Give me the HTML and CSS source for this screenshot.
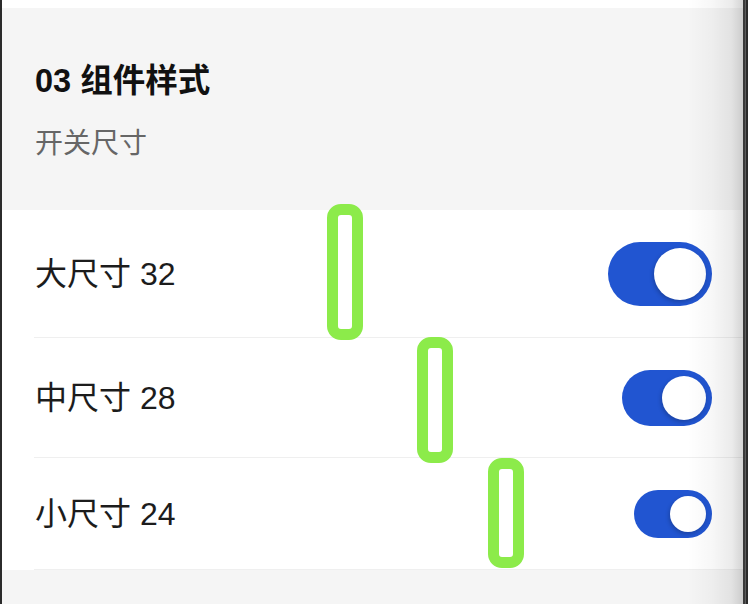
FILE: index.html
```html
<!DOCTYPE html>
<html lang="zh-CN">
<head>
  <meta charset="UTF-8">
  <meta name="viewport" content="width=device-width, initial-scale=1.0">
  <title>开关尺寸</title>
  <link rel="stylesheet" href="styles.css">
</head>
<body>
  <div class="device">
    <div class="bezel-left"></div>

    <div class="screen">
      <div class="top-strip"></div>

      <div class="section-head">
        <h2 class="section-title">03 组件样式</h2>
        <p class="section-desc">开关尺寸</p>
      </div>

      <div class="list">
        <div class="row">
          <span class="row-label">大尺寸 32</span>
          <span class="switch switch-lg is-on" role="switch" aria-checked="true"><span class="knob"></span></span>
        </div>
        <div class="row">
          <span class="row-label">中尺寸 28</span>
          <span class="switch switch-md is-on" role="switch" aria-checked="true"><span class="knob"></span></span>
        </div>
        <div class="row">
          <span class="row-label">小尺寸 24</span>
          <span class="switch switch-sm is-on" role="switch" aria-checked="true"><span class="knob"></span></span>
        </div>

        <!-- annotation markers -->
        <span class="marker marker-1"></span>
        <span class="marker marker-2"></span>
        <span class="marker marker-3"></span>
      </div>

      <div class="edge-shadow"></div>
    </div>

    <div class="bezel-right"></div>
  </div>
</body>
</html>
```

FILE: styles.css
```css
html, body {
  margin: 0;
  padding: 0;
}
body {
  font-family: "Liberation Sans", "Noto Sans CJK SC", sans-serif;
  background: #f5f5f5;
}
.device {
  display: flex;
  min-height: 100vh;
}
.bezel-left {
  width: 2px;
  background: #2b2b2b;
}
.bezel-right {
  width: 5px;
  background: linear-gradient(to right, #3b3b3b 0 2px, #5c5c5c 2px 3px, #2a2a2a 3px);
}
.screen {
  flex: 1;
  position: relative;
  background: #f5f5f5;
  overflow: hidden;
}
.top-strip {
  height: 8px;
  background: #fff;
}
.section-head {
  padding: 53px 33px 48px;
}
.section-title {
  margin: 0;
  font-size: 32.5px;
  line-height: 40px;
  font-weight: 700;
  color: #111;
}
.section-desc {
  margin: 25px 0 0;
  font-size: 28px;
  line-height: 36px;
  color: #666;
}
.list {
  position: relative;
  background: #fff;
  padding-left: 32px;
}
.row {
  display: flex;
  align-items: center;
  justify-content: space-between;
  padding: 32px 31px 31px 1px;
  border-bottom: 1px solid #efefef;
}
.row-label {
  margin-bottom: 1px;
  font-size: 32px;
  line-height: 40px;
  color: #1c1c1c;
}
.switch {
  display: flex;
  justify-content: flex-end;
  align-items: center;
  box-sizing: border-box;
  padding: 6px;
  border-radius: 999px;
  background: #ccc;
}
.switch.is-on {
  background: #2155d1;
}
.knob {
  border-radius: 50%;
  background: #fff;
  box-shadow: -1px 2px 4px rgba(0, 0, 0, 0.22);
}
.switch-lg { width: 104px; height: 64px; }
.switch-lg .knob { width: 52px; height: 52px; }
.switch-md { width: 90px; height: 56px; }
.switch-md .knob { width: 44px; height: 44px; }
.switch-sm { width: 78px; height: 48px; }
.switch-sm .knob { width: 36px; height: 36px; }

.marker {
  position: absolute;
  box-sizing: border-box;
  width: 36px;
  border: 11px solid #8ceb4a;
  border-radius: 14px;
}
.marker-1 { left: 325px; top: -6px; height: 136px; }
.marker-2 { left: 415px; top: 127px; height: 126px; }
.marker-3 { left: 486px; top: 248px; height: 110px; }

.edge-shadow {
  position: absolute;
  top: 0;
  right: 0;
  bottom: 0;
  width: 56px;
  pointer-events: none;
  background: linear-gradient(to right, rgba(0, 0, 0, 0) 0%, rgba(0, 0, 0, 0.03) 45%, rgba(0, 0, 0, 0.08) 80%, rgba(0, 0, 0, 0.17) 100%);
}
```
